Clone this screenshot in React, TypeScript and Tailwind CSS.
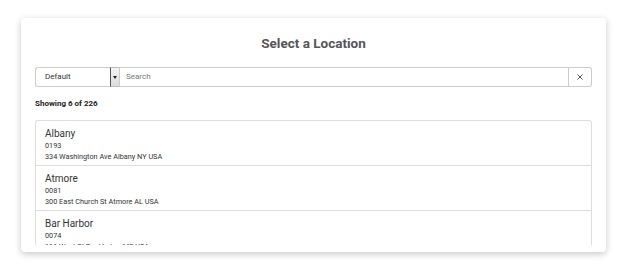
import React from "react";

const items = [
  { name: "Albany", code: "0193", addr: "334 Washington Ave Albany NY USA" },
  { name: "Atmore", code: "0081", addr: "300 East Church St Atmore AL USA" },
  { name: "Bar Harbor", code: "0074", addr: "111 West St Bar Harbor ME USA" },
];

export default function App() {
  return (
    <div className="w-[629px] h-[273px] bg-white overflow-hidden pt-[18px] pl-[21px]" style={{ fontFamily: "Roboto, 'Liberation Sans', sans-serif" }}>
      <div className="w-[585px] h-[234px] bg-white rounded-[4px] shadow-[0_2px_7px_rgba(0,0,0,0.22)] px-[14px] pt-[17px] flex flex-col">
        <div className="text-center text-[13.5px] leading-[16px] font-bold text-[#555]">Select a Location</div>
        <div className="mt-[16px] flex h-[20px]">
          <div className="w-[75px] border border-[#ccc] border-r-0 rounded-l-[3px] flex items-center pl-[9px] text-[8px] text-[#333]">Default</div>
          <div className="w-[9px] border-l border-l-[#555] border-y border-y-[#bbb] bg-gradient-to-b from-[#f4f4f4] to-[#dcdcdc] flex items-center justify-center">
            <div className="w-0 h-0 border-l-[2px] border-r-[2px] border-t-[3px] border-l-transparent border-r-transparent border-t-[#222]" />
          </div>
          <div className="flex-1 border border-[#ccc] flex items-center pl-[6px] text-[8px] text-[#777]">Search</div>
          <div className="w-[23px] border border-[#ccc] border-l-0 rounded-r-[3px] flex items-center justify-center text-[#444]">
            <svg width="6" height="6" viewBox="0 0 6 6"><path d="M0.5 0.5 L5.5 5.5 M5.5 0.5 L0.5 5.5" stroke="#444" strokeWidth="0.9" /></svg>
          </div>
        </div>
        <div className="mt-[12px] text-[8px] leading-[10px] font-bold text-[#222]">Showing 6 of 226</div>
        <div className="mt-[11px] h-[125px] overflow-hidden border-x border-t border-[#ddd] rounded-t-[3px]">
          {items.map((it) => (
            <div key={it.name} className="border-b border-[#ddd] pl-[9px] pt-[7px] pb-[2px] h-[45px]">
              <div className="text-[10px] leading-[12px] text-[#333]">{it.name}</div>
              <div className="text-[7.3px] leading-[11px] text-[#333]">{it.code}</div>
              <div className="text-[7.3px] leading-[11px] text-[#333]">{it.addr}</div>
            </div>
          ))}
        </div>
      </div>
    </div>
  );
}
